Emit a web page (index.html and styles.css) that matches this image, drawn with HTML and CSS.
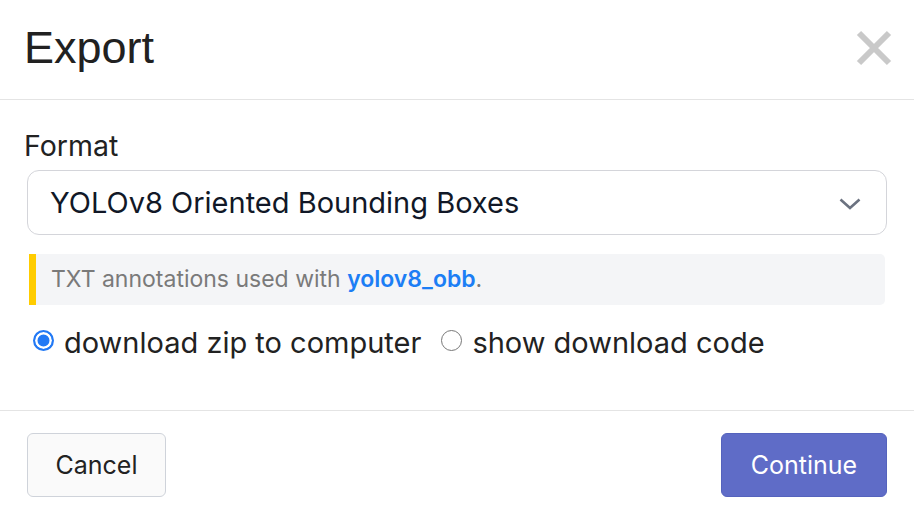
FILE: index.html
```html
<!DOCTYPE html>
<html>
<head>
    <title>Export</title>
    <link rel="stylesheet" href="styles.css">
</head>
<body>
    <div class="modal">
        <div class="modal-header">
            <h1 class="modal-title">Export</h1>
            <button class="close-button" aria-label="Close">
                <svg width="36" height="36" viewBox="0 0 36 36">
                    <path d="M3 3 L33 33 M33 3 L3 33" stroke="#c9c9c9" stroke-width="6" stroke-linecap="butt" fill="none"/>
                </svg>
            </button>
        </div>

        <div class="modal-body">
            <label class="field-label">Format</label>
            <div class="select-box">
                <span class="select-value">YOLOv8 Oriented Bounding Boxes</span>
                <svg class="chevron" width="22" height="12" viewBox="0 0 22 12">
                    <path d="M1.5 1.5 L11 10 L20.5 1.5" stroke="#6b7280" stroke-width="2.6" fill="none"/>
                </svg>
            </div>

            <!-- Format description -->
            <div class="format-note">TXT annotations used with <a href="#" class="format-link">yolov8_obb</a>.</div>

            <div class="radio-row">
                <label class="radio-option">
                    <input type="radio" name="method" class="radio" checked>
                    <span>download zip to computer</span>
                </label>
                <label class="radio-option">
                    <input type="radio" name="method" class="radio">
                    <span>show download code</span>
                </label>
            </div>
        </div>

        <div class="modal-footer">
            <button class="btn btn-cancel">Cancel</button>
            <button class="btn btn-continue">Continue</button>
        </div>
    </div>
</body>
</html>
```

FILE: styles.css
```css
body {
    margin: 0;
    background-color: #fff;
    color: #222;
    font-family: 'Inter', 'Noto Sans', sans-serif;
}
.modal {
    width: 914px;
    height: 512px;
    overflow: hidden;
}
.modal-header {
    display: flex;
    justify-content: space-between;
    align-items: center;
    height: 100px;
    box-sizing: border-box;
    padding: 0 22px 4px 24px;
    border-bottom: 1px solid #e4e4e4;
}
.modal-title {
    margin: 0;
    font-family: 'Liberation Sans', Arial, sans-serif;
    font-size: 45px;
    font-weight: normal;
    line-height: 1;
    color: #212121;
}
.close-button {
    display: flex;
    padding: 0;
    border: none;
    background: none;
    cursor: pointer;
}
.modal-body {
    padding: 29px 27px 50px 27px;
}
.field-label {
    display: block;
    font-size: 28.5px;
    line-height: 34px;
    margin-left: -3px;
    margin-bottom: 7px;
}
.select-box {
    display: flex;
    justify-content: space-between;
    align-items: center;
    height: 65px;
    box-sizing: border-box;
    padding: 0 25px 0 22px;
    border: 1px solid #d4d5da;
    border-radius: 12px;
    font-size: 29px;
    color: #111827;
}
.chevron {
    margin-top: 2px;
}
.format-note {
    margin: 19px 2px 0 2px;
    height: 51px;
    line-height: 51px;
    box-sizing: border-box;
    padding-left: 15px;
    border-left: 7px solid #ffcc00;
    border-radius: 0 5px 5px 0;
    background-color: #f4f5f7;
    font-size: 23px;
    color: #7a7a7a;
}
.format-link {
    color: #1c7ef5;
    font-weight: 600;
    text-decoration: none;
}
.radio-row {
    display: flex;
    gap: 20px;
    margin-top: 21px;
    margin-left: 6px;
}
.radio-option {
    display: flex;
    gap: 10px;
    font-size: 29px;
    line-height: 34px;
    color: #222;
}
.radio {
    appearance: none;
    margin: 4px 0 0 0;
    width: 21px;
    height: 21px;
    box-sizing: border-box;
    border-radius: 50%;
    border: 1.5px solid #777;
    background-color: #fff;
}
.radio:checked {
    border: 2px solid #2279f5;
    background-color: #2279f5;
    box-shadow: inset 0 0 0 2.5px #fff;
}
.modal-footer {
    display: flex;
    justify-content: space-between;
    align-items: center;
    padding: 22px 27px 0 27px;
    border-top: 1px solid #e4e4e4;
}
.btn {
    height: 64px;
    box-sizing: border-box;
    font-family: 'Inter', sans-serif;
    font-size: 25px;
    border-radius: 6px;
    cursor: pointer;
}
.btn-cancel {
    width: 139px;
    background-color: #fafafa;
    border: 1px solid #cfd3da;
    color: #222;
}
.btn-continue {
    width: 166px;
    background-color: #5f6cc7;
    border: 1px solid #5563bd;
    color: #fff;
}
```
